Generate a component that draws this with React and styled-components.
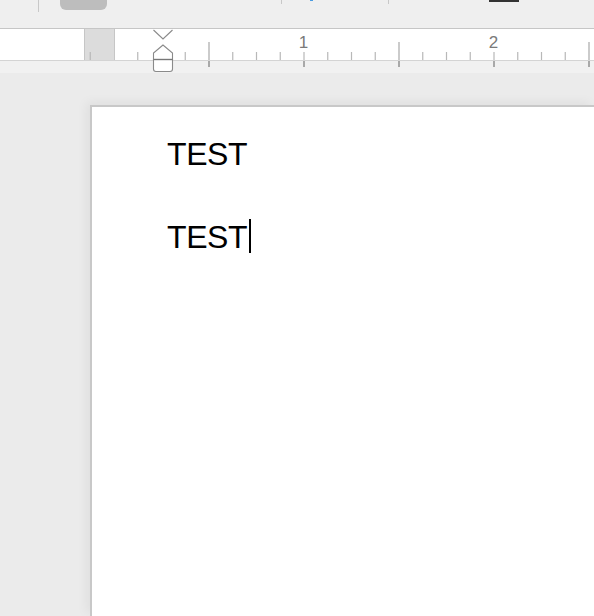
import styled, { createGlobalStyle } from "styled-components";

const GlobalStyle = createGlobalStyle`
  html, body {
    margin: 0;
    padding: 0;
    overflow: hidden;
    background: #ebebeb;
  }
  body {
    font-family: "Liberation Sans", Arial, sans-serif;
  }
`;

const INCH = 190;
const ORIGIN = 114;
const STEP = INCH / 8;

// 툴바 (위쪽이 잘려 있음)
const Toolbar = styled.div`
  display: flex;
  align-items: flex-start;
  height: 28px;
  background: #efefef;
  border-bottom: 1px solid #c6c6c6;
`;

const Divider = styled.div`
  width: 1px;
  height: ${(p) => p.$h}px;
  margin-left: ${(p) => p.$left}px;
  background: #c8c8c8;
`;

const ToolButton = styled.div`
  width: 47px;
  height: 10px;
  margin-left: 21px;
  background: #bdbdbd;
  border-radius: 0 0 6px 6px;
`;

const Sliver = styled.div`
  width: ${(p) => p.$w}px;
  height: ${(p) => p.$h}px;
  margin-left: ${(p) => p.$left}px;
  background: ${(p) => p.$color};
`;

// 눈금자
const RulerWrap = styled.div`
  position: relative;
  height: 44px;
`;

const RulerStrip = styled.div`
  height: 31px;
  background: #ffffff;
  border-bottom: 1px solid #d4d4d4;
`;

const RulerBand = styled.div`
  height: 12px;
  background: #f1f1f1;
`;

const RulerMarks = styled.svg`
  position: absolute;
  left: 0;
  top: 0;
`;

const RulerNumber = styled.text`
  font-family: "Liberation Sans", Arial, sans-serif;
  font-size: 17px;
  fill: #7a7a7a;
`;

// 작업 영역
const Workspace = styled.div`
  padding: 32px 0 0 90px;
  height: 543px;
  box-sizing: border-box;
`;

const Page = styled.div`
  background: #ffffff;
  border-left: 2px solid #c8c8c8;
  border-top: 2px solid #c8c8c8;
  box-shadow: -4px -3px 10px rgba(0, 0, 0, 0.05);
  height: 100%;
  padding: 27px 0 0 75px;
  box-sizing: border-box;
`;

const Paragraph = styled.p`
  margin: 0;
  font-size: 32px;
  line-height: 41.5px;
  letter-spacing: -0.4px;
  color: #000;
  min-height: 41.5px;
`;

const Caret = styled.span`
  display: inline-block;
  width: 2px;
  height: 34px;
  margin-left: 2px;
  vertical-align: -5px;
  background: #000;
`;

const Ruler = () => {
  const ticks = [];
  for (let k = -1; k <= 20; k++) {
    if (k === 0 || k === 2) continue;
    const x = ORIGIN + k * STEP;
    const major = k > 0 && k % 4 === 0 && k % 8 !== 0;
    ticks.push(
      <line
        key={`t${k}`}
        x1={x}
        x2={x}
        y1={major ? 13 : 23}
        y2={31}
        stroke={major ? "#a8a8a8" : "#b8b8b8"}
        strokeWidth="1.2"
      />
    );
    if (k > 0 && k % 4 === 0) {
      ticks.push(
        <line key={`b${k}`} x1={x} x2={x} y1={32} y2={38} stroke="#7a7a7a" strokeWidth="1.2" />
      );
    }
  }

  return (
    <RulerWrap>
      <RulerStrip />
      <RulerBand />
      <RulerMarks width="594" height="44" viewBox="0 0 594 44">
        <rect x="84" y="0" width="31" height="31" fill="#dcdcdc" />
        <line x1="84.5" x2="84.5" y1="0" y2="31" stroke="#c6c6c6" />
        <line x1="114.5" x2="114.5" y1="0" y2="31" stroke="#c6c6c6" />
        {ticks}
        <RulerNumber x={ORIGIN + INCH - 0.5} y="19" textAnchor="middle">1</RulerNumber>
        <RulerNumber x={ORIGIN + 2 * INCH - 0.5} y="19" textAnchor="middle">2</RulerNumber>
        <path d="M153.5 1 L163 10 L172.5 1" fill="#fff" stroke="#8a8a8a" strokeWidth="1.1" />
        <path d="M163 16 L153.5 24 L153.5 30.5 L172.5 30.5 L172.5 24 Z" fill="#fff" stroke="#8a8a8a" strokeWidth="1.1" />
        <path d="M153.5 30.5 L153.5 40 Q153.5 42.5 156 42.5 L170 42.5 Q172.5 42.5 172.5 40 L172.5 30.5 Z" fill="#fff" stroke="#8a8a8a" strokeWidth="1.1" />
        <line x1="153.5" x2="172.5" y1="30.5" y2="30.5" stroke="#777" strokeWidth="1.4" />
      </RulerMarks>
    </RulerWrap>
  );
};

const App = () => (
  <>
    <GlobalStyle />
    <Toolbar>
      <Divider $left={38} $h={12} />
      <ToolButton />
      <Divider $left={174} $h={4} />
      <Sliver $left={28} $w={3} $h={1} $color="#4a9be0" />
      <Divider $left={75} $h={4} />
      <Sliver $left={100} $w={30} $h={2} $color="#333" />
    </Toolbar>
    <Ruler />
    <Workspace>
      <Page>
        <Paragraph>TEST</Paragraph>
        <Paragraph />
        <Paragraph>
          TEST
          <Caret />
        </Paragraph>
      </Page>
    </Workspace>
  </>
);

export default App;
